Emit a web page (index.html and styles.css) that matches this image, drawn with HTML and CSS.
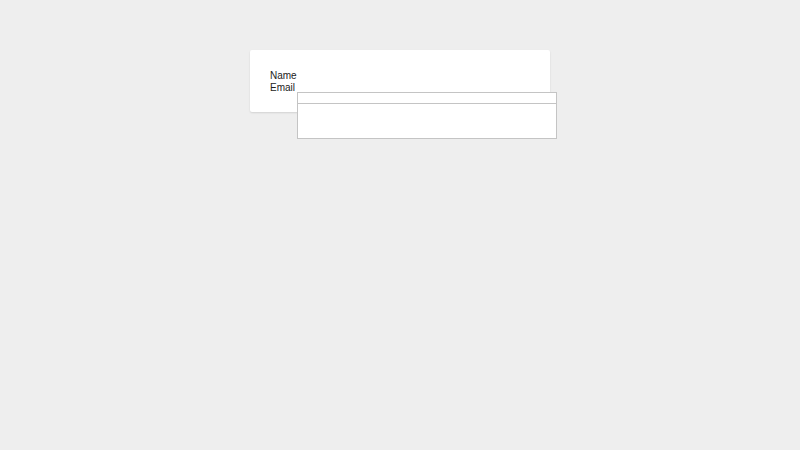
FILE: index.html
```html
<!DOCTYPE html>
<html>
<head>
<meta charset="utf-8">
<link rel="stylesheet" href="styles.css">
</head>
<body>
<div class="card">
  <div class="labels">
    <div class="label">Name</div>
    <div class="label">Email</div>
  </div>
  <div class="fields">
    <div class="field field-short"></div>
    <div class="field field-tall"></div>
  </div>
</div>
</body>
</html>
```
FILE: styles.css
```css
html, body {
  margin: 0;
  padding: 0;
  background: #eeeeee;
  min-height: 450px;
}
body {
  font-family: "Liberation Sans", Arial, sans-serif;
  padding-top: 50px;
  box-sizing: border-box;
}
.card {
  display: flex;
  align-items: flex-start;
  box-sizing: border-box;
  width: 300px;
  height: 62px;
  margin: 0 0 0 250px;
  padding: 20px 20px 0;
  background: #ffffff;
  border-radius: 2px;
  box-shadow: 0 1px 2px rgba(0, 0, 0, 0.12);
}
.labels {
  width: 27px;
  flex: none;
  font-size: 10px;
  line-height: 1.15;
  color: #222222;
  white-space: nowrap;
}
.fields {
  flex: none;
  width: 260px;
  margin-top: 22px;
}
.field {
  box-sizing: border-box;
  background: #ffffff;
  border: 1px solid #c4c4c4;
}
.field-short {
  height: 12px;
}
.field-tall {
  height: 36px;
  margin-top: -1px;
}
```
